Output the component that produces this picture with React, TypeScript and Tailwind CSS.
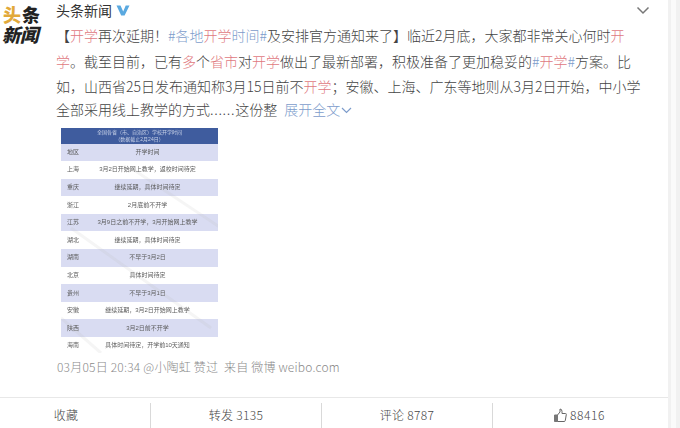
const R = ({ children }: { children: React.ReactNode }) => <span className="text-[#e0787e]">{children}</span>;
const B = ({ children }: { children: React.ReactNode }) => <span className="text-[#7d9ccb]">{children}</span>;

const rows = [
  ["地区", "开学时间"],
  ["上海", "3月2日开始网上教学，返校时间待定"],
  ["重庆", "继续延期，具体时间待定"],
  ["浙江", "2月底前不开学"],
  ["江苏", "3月9日之前不开学，3月开始网上教学"],
  ["湖北", "继续延期，具体时间待定"],
  ["湖南", "不早于3月2日"],
  ["北京", "具体时间待定"],
  ["贵州", "不早于3月1日"],
  ["安徽", "继续延期，3月2日开始网上教学"],
  ["陕西", "3月2日前不开学"],
  ["海南", "具体时间待定，开学前10天通知"],
];

function Table() {
  return (
    <div className="relative w-[157px] h-[225px] ml-[5px] mt-[5px] overflow-hidden flex flex-col blur-[0.7px] text-[6px] text-[#5c5c5c]">
      <div className="h-[16px] shrink-0 bg-[#3f5c9e] text-[#c8d2e8] text-center text-[5px] leading-[7px] pt-px">
        <div>全国各省（市、自治区）学校开学时间</div>
        <div>（数据截止2月24日）</div>
      </div>
      {rows.map((r, i) => (
        <div key={r[0]} className={`h-[17.6px] shrink-0 flex items-center ${i % 2 === 0 ? "bg-[#d9dcf2]" : "bg-white"}`}>
          <span className="w-[30px] pl-[6px] shrink-0">{r[0]}</span>
          <span className="flex-1 text-center pr-[14px] whitespace-nowrap">{r[1]}</span>
        </div>
      ))}
      <svg className="absolute inset-0" width="157" height="225" viewBox="0 0 157 225" fill="none">
        <path d="M70 40L160 100M10 100L150 200M0 190L40 225" stroke="#bbb" strokeOpacity="0.14" strokeWidth="3" />
      </svg>
    </div>
  );
}

export default function App() {
  return (
    <div className="w-[680px] h-[428px] overflow-hidden flex bg-[#f1f1f1] text-[#333] font-['Liberation_Sans','Noto_Sans_CJK_SC',sans-serif]">
      <div className="w-[668px] h-full bg-white flex flex-col">
        <div className="flex-1 flex min-h-0">
          <div className="w-[56px] shrink-0 pl-[2px] pt-[4px] font-['Noto_Sans_CJK_SC',sans-serif] font-black text-[#222]">
            <div className="text-[18px] leading-[20px] pl-px tracking-[1px]"><span className="text-[#e2a93a]">头</span>条</div>
            <div className="text-[18.5px] leading-[20px] italic -tracking-[0.5px]">新闻</div>
          </div>
          <div className="flex-1 min-w-0 relative">
            <div className="h-[21px] flex items-center gap-[4px] text-[14px] font-['Noto_Sans_CJK_SC',sans-serif] text-[#333]">
              <span>头条新闻</span>
              <svg width="14" height="11" viewBox="0 0 14 11"><path d="M0.5 0.5h4l2.7 6 2.5-6h3.8L8.6 10.5H5.2Z" fill="#5aa9e0" /></svg>
            </div>
            <svg className="absolute right-[18px] top-[6px]" width="14" height="9" viewBox="0 0 14 9" fill="none"><path d="M1.5 1.5l5.5 5.5 5.5-5.5" stroke="#777" strokeWidth="1.5" /></svg>
            <div className="text-[14px] leading-[25.5px] whitespace-nowrap font-['Noto_Sans_CJK_SC',sans-serif] font-light text-[#444] mt-[2px]">
              <div>【<R>开学</R>再次延期！<B>#各地</B><R>开学</R><B>时间#</B>及安排官方通知来了】临近2月底，大家都非常关心何时<R>开</R></div>
              <div><R>学</R>。截至目前，已有<R>多</R>个<R>省市</R>对<R>开学</R>做出了最新部署，积极准备了更加稳妥的<B>#</B><R>开学</R><B>#</B>方案。比</div>
              <div>如，山西省25日发布通知称3月15日前不<R>开学</R>；安徽、上海、广东等地则从3月2日开始，中小学</div>
              <div className="flex items-center -mt-[2px] h-[25px]">全部采用线上教学的方式<span className="tracking-[0.7px]">......</span>这份整<span className="text-[#7d9ccb] ml-[7px]">展开全文</span>
                <svg className="ml-[1px]" width="11" height="7" viewBox="0 0 11 7" fill="none"><path d="M1 1l4.5 4.5L10 1" stroke="#7d9ccb" strokeWidth="1.2" /></svg>
              </div>
            </div>
            <Table />
            <div className="mt-[5px] ml-px text-[12px] text-[#8a8a8a] tracking-[0.2px] whitespace-nowrap font-['Noto_Sans_CJK_SC',sans-serif] font-light">03月05日 20:34 @小陶虹 赞过&nbsp; 来自 微博 weibo.com</div>
          </div>
        </div>
        <div className="h-[31px] shrink-0 border-t border-[#e8e8e8] grid grid-cols-[150px_171px_171px_176px] text-[12px] text-[#444] pt-[5px] font-['Noto_Sans_CJK_SC',sans-serif] font-light tracking-[0.3px]">
          <div className="pr-[18px] pb-[2px] flex items-center justify-center">收藏</div>
          <div className="border-l border-[#d9d9d9] pb-[2px] flex items-center justify-center">转发 3135</div>
          <div className="border-l border-[#d9d9d9] pb-[2px] flex items-center justify-center">评论 8787</div>
          <div className="border-l border-[#d9d9d9] pb-[2px] pr-[2px] flex items-center justify-center gap-[3px]">
            <svg width="13" height="14" viewBox="0 0 13 14" fill="none"><path d="M0.5 7h3v6.5h-3Z" fill="#777" stroke="#777" /><path d="M3.5 7l2.5-3V1q2 0 2 2.5V5.5h3.5q1 0 .8 1l-1 6q-.2 1-1.2 1H3.5" stroke="#666" strokeWidth="1" /></svg>
            <span className="tracking-[0.6px]">88416</span>
          </div>
        </div>
      </div>
      <div className="w-[3px] h-full bg-[#f1f1f1]" />
      <div className="w-[5px] h-full bg-[#fafafa]" />
    </div>
  );
}
